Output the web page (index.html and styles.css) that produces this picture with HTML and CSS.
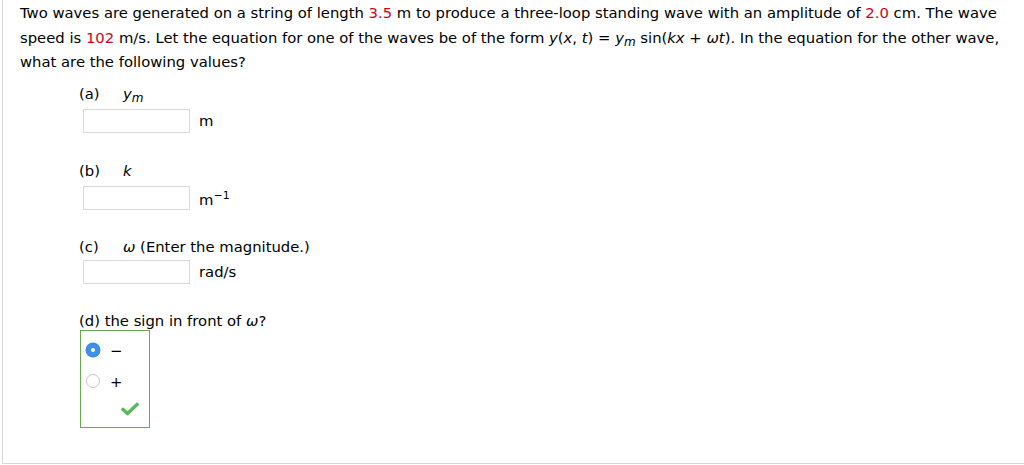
FILE: index.html
```html
<!DOCTYPE html>
<html>
<head>
<meta charset="utf-8">
<link rel="stylesheet" href="styles.css">
</head>
<body>
<div class="frame">
  <p class="stem">Two waves are generated on a string of length <span class="num">3.5</span> m to produce a three-loop standing wave with an amplitude of <span class="num">2.0</span> cm. The wave speed is <span class="num">102</span> m/s. Let the equation for one of the waves be of the form <i>y</i>(<i>x</i>, <i>t</i>) = <i>y<sub>m</sub></i> sin(<i>kx</i> + <i>ωt</i>). In the equation for the other wave, what are the following values?</p>

  <div class="part">
    <div class="label"><span class="tag">(a)</span><i>y<sub>m</sub></i></div>
    <div class="row"><span class="box"></span><span class="unit">m</span></div>
  </div>

  <div class="part">
    <div class="label"><span class="tag">(b)</span><i>k</i></div>
    <div class="row"><span class="box"></span><span class="unit unit-low">m<sup>−1</sup></span></div>
  </div>

  <div class="part part-c">
    <div class="label"><span class="tag">(c)</span><i>ω</i>&nbsp;(Enter the magnitude.)</div>
    <div class="row row-c"><span class="box"></span><span class="unit">rad/s</span></div>
  </div>

  <div class="part part-d">
    <div class="label label-d">(d) the sign in front of <i>ω</i>?</div>
    <div class="choices">
      <div class="choice"><span class="radio on"></span><span class="sym">−</span></div>
      <div class="choice"><span class="radio"></span><span class="sym">+</span></div>
      <svg class="check" width="18" height="14" viewBox="0 0 18 14"><path d="M2 7.5 L6.5 11.5 L16 2.5" fill="none" stroke="#5cb85c" stroke-width="3.6" stroke-linejoin="round" stroke-linecap="round"/></svg>
    </div>
  </div>
</div>
</body>
</html>
```

FILE: styles.css
```css
html, body {
  margin: 0;
  padding: 0;
  background: #fff;
}
body {
  font-family: "DejaVu Sans", Verdana, sans-serif;
  font-size: 14.8px;
  color: #000;
}
.frame {
  margin-left: 2px;
  border-left: 1px solid #d8d8d8;
  border-bottom: 1px solid #d8d8d8;
  height: 464px;
  box-sizing: border-box;
  padding: 1px 0 0 17px;
}
.stem {
  margin: 0;
  line-height: 24.5px;
  width: 1000px;
}
.num { color: #d0021b; }
sub {
  font-size: 12px;
  vertical-align: -3px;
  line-height: 0;
}
sup {
  font-size: 11px;
  vertical-align: 6px;
  line-height: 0;
}
.part {
  margin-left: 59px;
}
.label {
  margin-top: 9px;
  height: 20px;
  line-height: 20px;
}
.tag {
  display: inline-block;
  width: 44px;
}
.row {
  display: flex;
  align-items: center;
  margin-top: 5px;
  margin-left: 4px;
}
.box {
  display: inline-block;
  width: 105px;
  height: 22px;
  border: 1px solid #d9d9d9;
}
.unit {
  margin-left: 9px;
}
.unit-low { margin-top: 4px; }
.part + .part { margin-top: 28px; }
.part-c { margin-top: 27px !important; }
.row-c { margin-top: 3px; }
.part-d { margin-top: 27px !important; }
.label-d { margin-top: 0; }
.choices {
  position: relative;
  margin-top: -1px;
  margin-left: 1px;
  width: 68px;
  height: 95px;
  border: 1px solid #6aa84f;
  box-sizing: content-box;
  padding-top: 1px;
}
.choice {
  display: flex;
  align-items: center;
  height: 31px;
  padding-left: 5px;
}
.choice:first-child { margin-top: 3px; }
.radio {
  display: inline-block;
  width: 14px;
  height: 14px;
  border-radius: 50%;
  border: 1px solid #c6c6c6;
  background: #fff;
  box-sizing: border-box;
}
.radio.on {
  border: 5px solid #3d8fe8;
  background: #fff;
  box-shadow: 0 0 0 0.5px #3d8fe8;
}
.sym {
  margin-left: 10px;
}
.check {
  position: absolute;
  right: 10px;
  bottom: 11px;
}
```
